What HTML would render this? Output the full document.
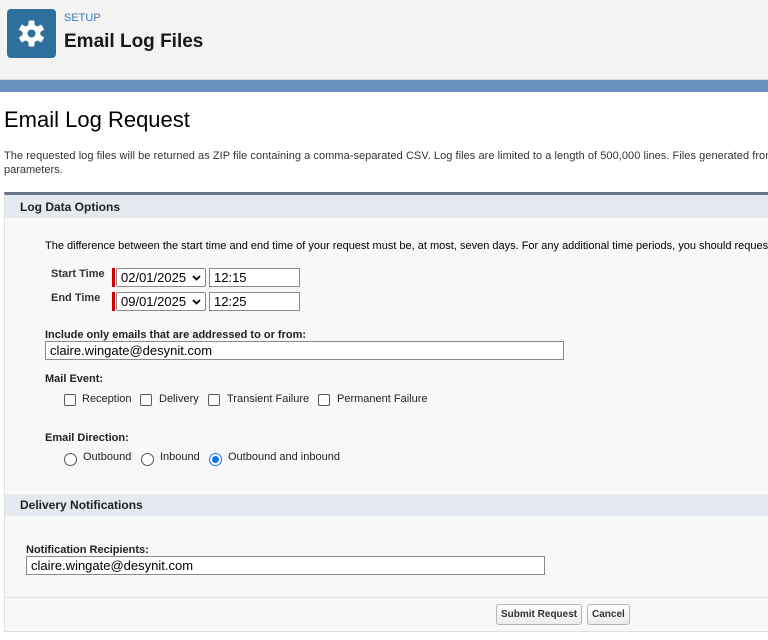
<!DOCTYPE html>
<html><head><meta charset="utf-8"><style>
*{box-sizing:border-box;margin:0;padding:0}
html,body{width:768px;height:640px;overflow:hidden}
body{background:#fff;font-family:"Liberation Sans",Arial,sans-serif;color:#000;position:relative}
.clip{position:absolute;left:0;top:0;width:768px;height:640px;overflow:hidden}
.a{position:absolute;white-space:nowrap}
.hdr{left:0;top:0;width:768px;height:80px;background:#f3f3f3;border-bottom:1px solid #ddd}
.band{left:0;top:80px;width:768px;height:12px;background:#6a90bd}
.icon{left:7px;top:9px;width:49px;height:49px;background:#2e6f9e;border-radius:4px}
.lbl{font-size:11px;font-weight:bold;color:#333}
.txt{font-size:11px;color:#000}
.inp{background:#fff;border:1px solid #8a8a8a;font-size:13px;padding:0 4px;line-height:17px;height:19px}
.cb{width:12px;height:12px;border:1px solid #555;border-radius:2px;background:#fff}
.rd{width:13px;height:13px;border:1px solid #555;border-radius:50%;background:#fff}
.btn{border:1px solid #b5b5b5;border-radius:3px;background:linear-gradient(#fff,#ececec);font-size:10px;font-weight:bold;color:#333;height:21px;line-height:19px;padding:0 4px}
.chev{position:absolute;right:4px;top:6px}
</style></head><body><div class="clip">
<div class="a hdr"></div>
<div class="a band"></div>
<div class="a icon"><svg width="49" height="49" viewBox="0 0 49 49"><g transform="translate(24.5 24.5)" fill="#fff"><circle r="9"/><g><rect x="-3" y="-13" width="6" height="6" rx="1"/><rect x="-3" y="-13" width="6" height="6" rx="1" transform="rotate(60)"/><rect x="-3" y="-13" width="6" height="6" rx="1" transform="rotate(120)"/><rect x="-3" y="-13" width="6" height="6" rx="1" transform="rotate(180)"/><rect x="-3" y="-13" width="6" height="6" rx="1" transform="rotate(240)"/><rect x="-3" y="-13" width="6" height="6" rx="1" transform="rotate(300)"/></g><circle r="4" fill="#2e6f9e"/></g></svg></div>
<div class="a" style="left:64px;top:12px;font-size:11px;color:#3e7bb0">SETUP</div>
<div class="a" style="left:64px;top:31px;font-size:19px;font-weight:bold;color:#181818">Email Log Files</div>

<div class="a" style="left:4px;top:107px;font-size:22px;color:#000">Email Log Request</div>
<div class="a txt" style="left:4px;top:150px;font-size:11px;color:#333;width:764px;overflow:hidden;letter-spacing:0.05px">The requested log files will be returned as ZIP file containing a comma-separated CSV. Log files are limited to a length of 500,000 lines. Files generated from your request</div>
<div class="a txt" style="left:4px;top:164px;font-size:11px;color:#333">parameters.</div>

<div class="a" style="left:4px;top:192px;width:764px;height:440px;background:#f8f8f8;border-top:3px solid #6a7487;border-left:1px solid #e0e0e0;border-bottom:1px solid #e0e0e0"></div>
<div class="a" style="left:5px;top:195px;width:763px;height:23px;background:#e5e9f0"></div>
<div class="a" style="left:20px;top:200px;font-size:12px;font-weight:bold;color:#222">Log Data Options</div>
<div class="a txt" style="left:45px;top:240px;width:723px;overflow:hidden">The difference between the start time and end time of your request must be, at most, seven days. For any additional time periods, you should request</div>

<div class="a lbl" style="left:51px;top:268px">Start Time</div>
<div class="a" style="left:112px;top:268px;width:3px;height:19px;background:#c00"></div>
<div class="a inp" style="left:116px;top:268px;width:90px;border-radius:2px">02/01/2025<svg class="chev" width="9" height="6" viewBox="0 0 9 6"><path d="M1 1l3.5 3.5L8 1" stroke="#000" stroke-width="1.8" fill="none"/></svg></div>
<div class="a inp" style="left:209px;top:268px;width:91px">12:15</div>
<div class="a lbl" style="left:51px;top:292px">End Time</div>
<div class="a" style="left:112px;top:292px;width:3px;height:19px;background:#c00"></div>
<div class="a inp" style="left:116px;top:292px;width:90px;border-radius:2px">09/01/2025<svg class="chev" width="9" height="6" viewBox="0 0 9 6"><path d="M1 1l3.5 3.5L8 1" stroke="#000" stroke-width="1.8" fill="none"/></svg></div>
<div class="a inp" style="left:209px;top:292px;width:91px">12:25</div>

<div class="a lbl" style="left:45px;top:329px;color:#222">Include only emails that are addressed to or from:</div>
<div class="a inp" style="left:45px;top:341px;width:519px">claire.wingate@desynit.com</div>

<div class="a lbl" style="left:45px;top:373px;color:#222">Mail Event:</div>
<div class="a cb" style="left:64px;top:394px"></div><div class="a txt" style="left:82px;top:393px;color:#222">Reception</div>
<div class="a cb" style="left:140px;top:394px"></div><div class="a txt" style="left:159px;top:393px;color:#222">Delivery</div>
<div class="a cb" style="left:208px;top:394px"></div><div class="a txt" style="left:227px;top:393px;color:#222">Transient Failure</div>
<div class="a cb" style="left:318px;top:394px"></div><div class="a txt" style="left:337px;top:393px;color:#222">Permanent Failure</div>

<div class="a lbl" style="left:45px;top:432px;color:#222">Email Direction:</div>
<div class="a rd" style="left:64px;top:453px"></div><div class="a txt" style="left:83px;top:451px;color:#222">Outbound</div>
<div class="a rd" style="left:141px;top:453px"></div><div class="a txt" style="left:160px;top:451px;color:#222">Inbound</div>
<div class="a rd" style="left:209px;top:453px;border-color:#1a73e8"><div style="position:absolute;left:2px;top:2px;width:7px;height:7px;border-radius:50%;background:#1a73e8"></div></div>
<div class="a txt" style="left:228px;top:451px;color:#222">Outbound and inbound</div>

<div class="a" style="left:5px;top:493px;width:763px;height:1px;background:#fff"></div>
<div class="a" style="left:5px;top:494px;width:763px;height:22px;background:#e5e9f0"></div>
<div class="a" style="left:20px;top:498px;font-size:12px;font-weight:bold;color:#222">Delivery Notifications</div>
<div class="a lbl" style="left:26px;top:544px;color:#222">Notification Recipients:</div>
<div class="a inp" style="left:26px;top:556px;width:519px">claire.wingate@desynit.com</div>
<div class="a" style="left:5px;top:597px;width:763px;height:1px;background:#e4e4e4"></div>
<div class="a btn" style="left:496px;top:604px">Submit Request</div>
<div class="a btn" style="left:587px;top:604px">Cancel</div>
</div></body></html>
